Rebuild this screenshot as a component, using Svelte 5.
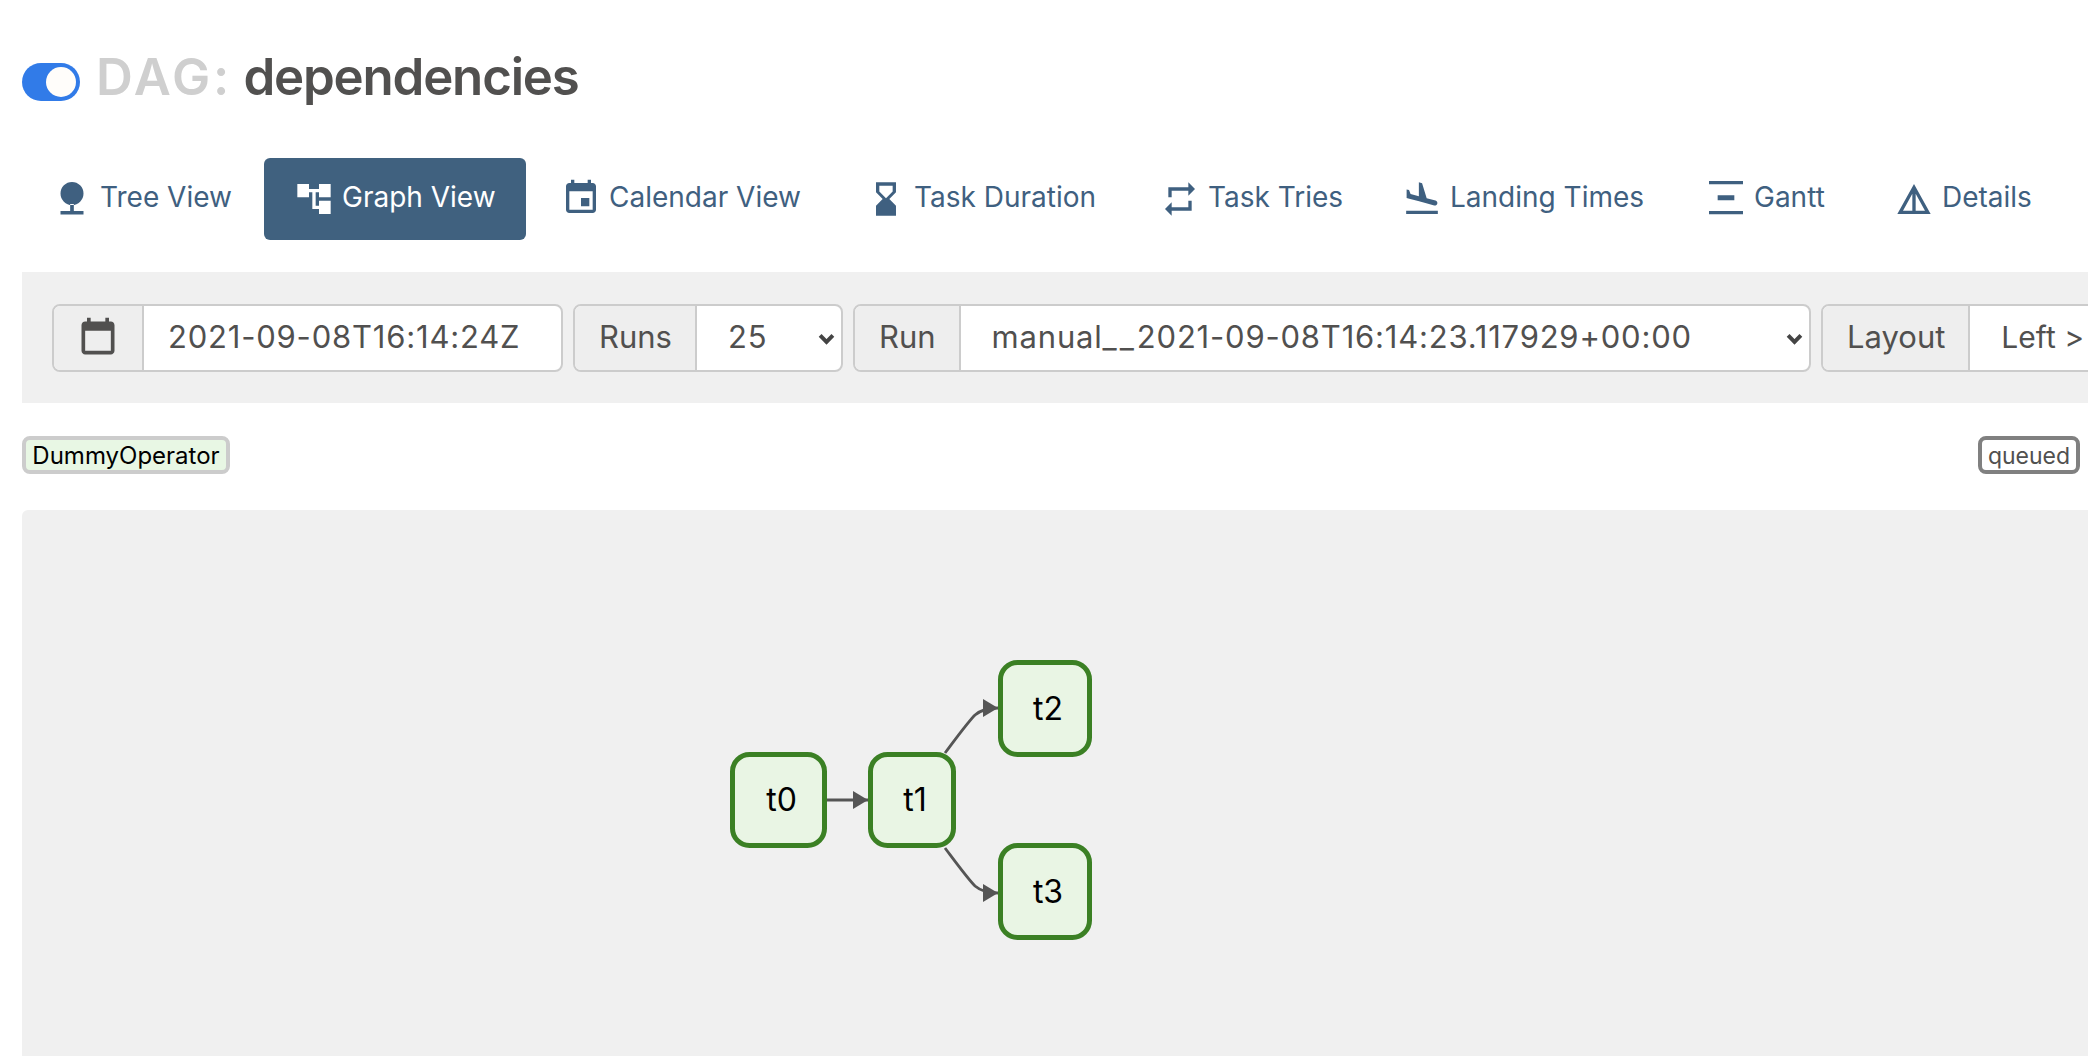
<script>
  const tabs = [
    { label: 'Tree View', icon: 'tree' },
    { label: 'Graph View', icon: 'graph', active: true },
    { label: 'Calendar View', icon: 'cal' },
    { label: 'Task Duration', icon: 'hour' },
    { label: 'Task Tries', icon: 'rep' },
    { label: 'Landing Times', icon: 'land' },
    { label: 'Gantt', icon: 'gantt' },
    { label: 'Details', icon: 'details' }
  ];
  const paths = {
    tree: 'M12 1.800a6.900 6.900 0 1 0 0 13.800a6.900 6.900 0 1 0 0-13.800zM10.900 15h2.200v4.400h-2.200zM5.100 19.200h13.800v2.100H5.100z',
    graph: 'M22 11V3h-7v3H9V3H2v8h7V8h2v10h4v3h7v-8h-7v3h-2V8h2v3h7z',
    cal: 'M17 12h-5v5h5v-5zM16 1v2H8V1H6v2H5c-1.110 0-1.990.9-1.990 2L3 19c0 1.100.89 2 2 2h14c1.100 0 2-.9 2-2V5c0-1.100-.9-2-2-2h-1V1h-2zm3 18H5V8h14v11z',
    hour: 'M18 22l-.01-6L14 12l3.990-4.010L18 2H6v6l4 4-4 3.990V22h12zM8 7.500V4h8v3.500l-4 4-4-4z',
    rep: 'M7 7h10v3l4-4-4-4v3H5v6h2V7zm10 10H7v-3l-4 4 4 4v-3h12v-6h-2v4z',
    land: 'M2.500 19h19v2h-19zm7.180-5.730l4.350 1.160 5.310 1.420c.8.210 1.620-.26 1.840-1.060.21-.8-.26-1.620-1.060-1.840l-5.310-1.420-2.760-9.020L10.120 2v8.280L5.150 8.950l-.93-2.320-1.450-.39v5.170l1.600.43 5.310 1.430z',
    gantt: 'M1.800 1.200h20.400v2H1.800zM1.800 19.200h20.400v2H1.800zM7 9.700h10v3H7z',
    details: 'M12 3L2 21h20L12 3zm1 5.920L18.600 19H13V8.920zm-2 0V19H5.400L11 8.920z'
  };
  const nodes = [
    { id: 't0', x: 732.5, y: 754.5, w: 92, h: 91 },
    { id: 't1', x: 870.5, y: 754.5, w: 83, h: 91 },
    { id: 't2', x: 1000.5, y: 662.5, w: 89, h: 92 },
    { id: 't3', x: 1000.5, y: 845.5, w: 89, h: 92 }
  ];
</script>

<div class="page">
  <h1 class="title">
    <span class="toggle"><span class="knob"></span></span>
    <span class="dag">DAG:</span>
    <span class="name">dependencies</span>
  </h1>

  <nav class="tabs">
    {#each tabs as t}
      <a class="tab" class:active={t.active} href="#{t.icon}">
        <svg class="ico" class:ico-up={t.icon === 'cal'} viewBox="0 0 24 24"><path d={paths[t.icon]} fill="currentColor" /></svg>
        <span class="tab-text">{t.label}</span>
      </a>
    {/each}
  </nav>

  <div class="toolbar">
    <div class="group g1">
      <span class="addon date-addon">
        <svg viewBox="0 0 24 24"><path d="M5 21h14c1.100 0 2-.9 2-2V5c0-1.100-.9-2-2-2h-1V1h-2v2H8V1H6v2H5c-1.100 0-2 .9-2 2v14c0 1.100.9 2 2 2zM5 8h14v11H5V8z" fill="currentColor"/></svg>
      </span>
      <span class="field">2021-09-08T16:14:24Z</span>
    </div>
    <div class="group g2">
      <span class="addon">Runs</span>
      <span class="field sel">25<svg class="chev" viewBox="0 0 12 8"><path d="M1.500 1.500 6 6l4.500-4.500" /></svg></span>
    </div>
    <div class="group g3">
      <span class="addon">Run</span>
      <span class="field sel">manual<span class="us">__</span>2021-09-08T16:14:23.117929+00:00<svg class="chev" viewBox="0 0 12 8"><path d="M1.500 1.500 6 6l4.500-4.500" /></svg></span>
    </div>
    <div class="group g4">
      <span class="addon">Layout</span>
      <span class="field sel tight">Left &gt;</span>
    </div>
  </div>

  <div class="legend">
    <span class="badge op">DummyOperator</span>
    <span class="badge st">queued</span>
  </div>

  <div class="graph">
    <svg class="canvas" viewBox="0 0 2088 1056">
      <defs>
        <marker id="arr" markerUnits="userSpaceOnUse" markerWidth="18" markerHeight="18" refX="15" refY="9" orient="auto">
          <path d="M0 0 L15 9 L0 18 z" fill="#555" />
        </marker>
      </defs>
      <path class="edge" d="M827 800 H868" marker-end="url(#arr)" />
      <path class="edge" d="M945 753 C960 733 968 722 975 715 C982 709 990 708 998 708" marker-end="url(#arr)" />
      <path class="edge" d="M945 848 C960 868 968 879 975 886 C982 892 990 893 998 893" marker-end="url(#arr)" />
      {#each nodes as n}
        <rect class="node" x={n.x} y={n.y} width={n.w} height={n.h} rx="17" />
        <text class="lbl" x={n.x + n.w / 2 + 3} y={n.y + n.h / 2 + 11}>{n.id}</text>
      {/each}
    </svg>
  </div>
</div>

<style>
  :global(body) { margin: 0; background: #fff; overflow: hidden; }
  .page {
    width: 2088px; height: 1056px; overflow: hidden; box-sizing: border-box;
    padding: 0 0 0 22px;
    font-family: Inter, "Liberation Sans", sans-serif; color: #51504f;
  }
  .title {
    display: flex; align-items: center; margin: 0; height: 158px;
    padding-bottom: 6px; box-sizing: border-box;
    font-size: 51px; font-weight: 600; line-height: 1;
  }
  .toggle { width: 58px; height: 38px; background: #317be8; border-radius: 19px; position: relative; flex: none; margin: 11px 16px 0 0; }
  .knob { position: absolute; right: 4px; top: 4px; width: 30px; height: 30px; background: #fffdfa; border-radius: 50%; }
  .dag { color: #cfcfcf; letter-spacing: 3px; margin-right: 11px; }
  .name { color: #51504f; letter-spacing: -1.2px; }
  .tabs {
    display: grid; height: 82px; gap: 5px; align-items: stretch;
    grid-template-columns: 237px 262px 300px 289px 237px 299px 183px 199px;
  }
  .tab {
    display: flex; align-items: center; gap: 8px; padding: 0 0 0 30px;
    color: #3f6080; text-decoration: none; font-size: 28px; font-weight: 400; border-radius: 6px; white-space: nowrap;
  }
  .tab-text { padding-bottom: 5px; }
  .tab.active { background: #40617f; color: #fff; }
  .ico { width: 40px; height: 40px; flex: none; }
  .ico-up { margin-top: -3px; }
  .toolbar {
    margin-top: 32px; height: 131px; background: #f0f0f0; display: flex; align-items: center;
    gap: 10px; padding: 0 0 0 30px; overflow: hidden; box-sizing: border-box;
    font-size: 31px;
  }
  .group {
    display: flex; height: 68px; border: 2px solid #ccc; border-radius: 8px; background: #fff; box-sizing: border-box; flex: none; overflow: hidden;
  }
  .addon { display: flex; align-items: center; justify-content: center; background: #eee; border-right: 2px solid #ccc; box-sizing: border-box; padding: 0 23px 2px 24px; }
  .date-addon { padding: 0; width: 90px; }
  .date-addon svg { width: 44px; height: 44px; }
  .field { display: flex; align-items: center; padding: 0 0 2px 24px; white-space: pre; position: relative; letter-spacing: 0.8px; }
  .us { letter-spacing: 3px; }
  .g1 { width: 511px; } .g2 { width: 270px; } .g3 { width: 958px; } .g4 { width: 280px; }
  .sel { flex: 1; padding-left: 31px; }
  .tight { letter-spacing: 0; font-size: 30px; }
  .chev { position: absolute; right: 6px; top: 27px; width: 17px; height: 12px; fill: none; stroke: #444; stroke-width: 2.800; }
  .legend { display: flex; justify-content: space-between; height: 38px; margin-top: 33px; padding-right: 8px; }
  .badge { display: flex; align-items: center; justify-content: center; box-sizing: border-box; border: 4px solid; border-radius: 8px; padding: 1px 0 0; }
  .op { background: #e8f7e4; border-color: #ccc; color: #000; width: 208px; font-size: 24px; }
  .st { background: #fff; border-color: #808080; color: #51504f; width: 102px; font-size: 23px; }
  .graph { margin-top: 36px; height: 546px; background: #f0f0f0; border-radius: 6px 0 0 0; position: relative; overflow: hidden; }
  .canvas { position: absolute; left: -22px; top: -510px; width: 2088px; height: 1056px; display: block; }
  .edge { fill: none; stroke: #555; stroke-width: 2.800; }
  .node { fill: #e9f5e4; stroke: #3b8024; stroke-width: 5; }
  .lbl { font-family: Inter, "Liberation Sans", sans-serif; font-size: 32px; fill: #000; text-anchor: middle; }
</style>
